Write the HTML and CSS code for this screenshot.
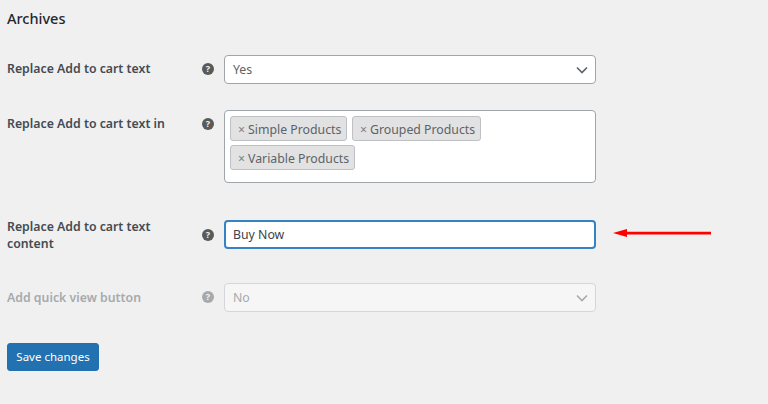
FILE: index.html
```html
<!DOCTYPE html>
<html lang="en">
<head>
<meta charset="utf-8">
<title>Archives</title>
<link rel="stylesheet" href="styles.css">
</head>
<body>
<main class="page">
  <h2 class="title">Archives</h2>
  <div class="row row-select">
    <div class="label">Replace Add to cart text</div>
    <svg class="help" viewBox="0 0 12 12"><circle cx="6" cy="6" r="6" fill="currentColor"/><text x="6" y="9.2" text-anchor="middle" class="help-mark">?</text></svg>
    <div class="field select">Yes<svg class="chev" viewBox="0 0 12 8"><path d="M1 1.5l5 5 5-5" fill="none" stroke="currentColor" stroke-width="1.6"/></svg></div>
  </div>
  <div class="row row-tags">
    <div class="label">Replace Add to cart text in</div>
    <svg class="help" viewBox="0 0 12 12"><circle cx="6" cy="6" r="6" fill="currentColor"/><text x="6" y="9.2" text-anchor="middle" class="help-mark">?</text></svg>
    <div class="field tags">
      <span class="tag"><span class="x">×</span>Simple Products</span>
      <span class="tag"><span class="x">×</span>Grouped Products</span>
      <span class="tag"><span class="x">×</span>Variable Products</span>
    </div>
  </div>
  <div class="row row-input">
    <div class="label">Replace Add to cart text content</div>
    <svg class="help" viewBox="0 0 12 12"><circle cx="6" cy="6" r="6" fill="currentColor"/><text x="6" y="9.2" text-anchor="middle" class="help-mark">?</text></svg>
    <div class="field input">Buy Now</div>
    <svg class="arrow" width="100" height="12" viewBox="0 0 100 12"><path d="M1 6l14-4v2.8h84v2.6H15V10z" fill="#ff0000"/></svg>
  </div>
  <div class="row row-disabled">
    <div class="label">Add quick view button</div>
    <svg class="help" viewBox="0 0 12 12"><circle cx="6" cy="6" r="6" fill="currentColor"/><text x="6" y="9.2" text-anchor="middle" class="help-mark">?</text></svg>
    <div class="field select">No<svg class="chev" viewBox="0 0 12 8"><path d="M1 1.5l5 5 5-5" fill="none" stroke="currentColor" stroke-width="1.6"/></svg></div>
  </div>
  <button class="save" type="button">Save changes</button>
</main>
</body>
</html>
```
FILE: styles.css
```css
html, body { margin: 0; padding: 0; }
body {
  width: 768px;
  height: 404px;
  overflow: hidden;
  background: #f0f0f1;
  color: #50575e;
  font-family: "Noto Sans", "Open Sans", sans-serif;
  font-size: 12.3px;
}
.page { padding: 8px 0 0 7px; }
.title {
  margin: 0 0 27px;
  font-size: 14.5px;
  line-height: 20px;
  font-weight: 500;
  color: #23282d;
}
.row {
  display: grid;
  grid-template-columns: 195px 22px 372px auto;
  align-items: start;
}
.label {
  width: 175px;
  font-weight: 600;
  line-height: 17px;
  color: #444b52;
  padding-top: 5px;
}
.help { width: 12px; height: 12px; color: #5a5a5a; margin-top: 8px; }
.help-mark { font: 700 9px "Noto Sans", sans-serif; fill: #f0f0f1; }
.field {
  box-sizing: border-box;
  width: 372px;
  background: #fff;
  border: 1px solid #a0a5aa;
  border-radius: 4px;
  color: #5c6369;
}
.select, .input {
  height: 29px;
  line-height: 27px;
  padding: 0 8px;
  position: relative;
}
.chev {
  position: absolute;
  right: 7px;
  top: 10px;
  width: 12px;
  height: 8px;
  color: #5c6369;
}
.row-select { margin-bottom: 26px; }
.tags {
  height: 73px;
  padding: 5px;
  display: flex;
  flex-wrap: wrap;
  align-content: flex-start;
  gap: 4px 5px;
}
.tag {
  box-sizing: border-box;
  height: 25px;
  line-height: 25px;
  padding: 0 4.5px 0 6px;
  background: #e2e2e2;
  border: 1px solid #bdc0c4;
  border-radius: 3px;
}
.x { margin: 0 3px 0 1px; color: #808080; }
.row-tags { margin-bottom: 37px; }
.row-input { margin-bottom: 31px; }
.row-input .label { padding-top: 0; margin-top: -2px; }
.row-input .help { margin-top: 9px; }
.input {
  border: 2px solid #3582c4;
  line-height: 25px;
  padding: 0 7px;
  color: #3c434a;
}
.arrow { margin: 7px 0 0 16px; }
.row-disabled { margin-bottom: 31px; }
.row-disabled .label { color: #a7aaad; padding-top: 6px; }
.row-disabled .help { color: #a7aaad; }
.row-disabled .field {
  background: #f6f6f7;
  border-color: #d5d6d9;
  color: #a7aaad;
}
.row-disabled .chev { color: #a7aaad; }
.save {
  display: block;
  box-sizing: border-box;
  width: 92px;
  height: 28px;
  padding: 0;
  background: #2271b1;
  border: 1px solid #2271b1;
  border-radius: 3px;
  color: #fff;
  font: 400 11.5px/26px "Noto Sans", "Open Sans", sans-serif;
}
```
